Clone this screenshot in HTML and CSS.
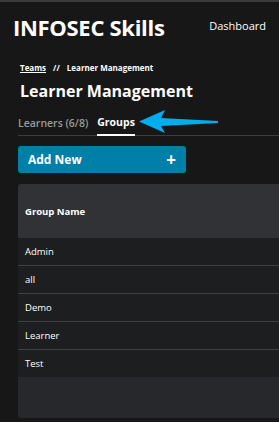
FILE: index.html
```html
<!DOCTYPE html>
<html lang="en">
<head>
<meta charset="UTF-8" />
<meta name="viewport" content="width=device-width, initial-scale=1" />
<title>Learner Management - INFOSEC Skills</title>
<link rel="stylesheet" href="styles.css">
</head>
<body>
  <header class="topbar">
    <div class="brand">INFOSEC Skills</div>
    <a class="nav-link" href="#">Dashboard</a>
  </header>

  <main class="page">
    <nav class="crumbs">
      <a href="#">Teams</a>
      <span class="sep">//</span>
      <span>Learner Management</span>
    </nav>
    <h1>Learner Management</h1>

    <div class="tabs">
      <span class="tab">Learners (6/8)</span>
      <span class="tab active">Groups</span>
      <svg class="pointer" width="82" height="26" viewBox="0 0 82 26">
        <path d="M0 11.5 L26 0 L22 8 L79 11 L79 13 L22 16 L26 23 Z" fill="#00aeef"/>
      </svg>
    </div>

    <button class="add-btn">
      <span>Add New</span>
      <span class="plus">+</span>
    </button>

    <div class="table">
      <div class="thead">Group Name</div>
      <div class="row">Admin</div>
      <div class="row">all</div>
      <div class="row">Demo</div>
      <div class="row">Learner</div>
      <div class="row last">Test</div>
      <div class="tfoot"></div>
    </div>
  </main>
</body>
</html>
```

FILE: styles.css
```css
* {
  box-sizing: border-box;
}
body {
  font-family: 'Open Sans', 'Noto Sans', sans-serif;
  background: #171717;
  color: #fff;
  margin: 0;
  border-top: 2px solid #3a3a3a;
  overflow: hidden;
  height: 422px;
}
a {
  color: #fff;
}

.topbar {
  display: flex;
  align-items: center;
  justify-content: space-between;
  padding: 8px 13px 0 13px;
  height: 42px;
}
.brand {
  font-size: 22px;
  font-weight: 700;
  letter-spacing: -0.3px;
}
.nav-link {
  font-size: 11px;
  text-decoration: none;
  margin-top: -4px;
}

.page {
  padding: 18px 0 0 18px;
}
.crumbs {
  font-size: 8px;
  font-weight: 700;
  padding-left: 2px;
  height: 12px;
}
.crumbs a {
  text-decoration: underline;
}
.crumbs .sep {
  margin: 0 5px;
}
h1 {
  font-size: 16px;
  font-weight: 700;
  margin: 5px 0 0 2px;
  line-height: 24px;
}

.tabs {
  display: flex;
  align-items: flex-end;
  gap: 9px;
  margin-top: 5px;
  border-bottom: 1px solid #3c3c3c;
  height: 28px;
}
.tab {
  font-size: 10.5px;
  font-weight: 600;
  color: #9a9a9a;
  padding-bottom: 5px;
}
.tab.active {
  color: #fff;
  font-weight: 700;
  border-bottom: 2px solid #fff;
  margin-bottom: -1px;
}
.pointer {
  align-self: center;
  margin-left: -5px;
  margin-top: 2px;
}

.add-btn {
  display: flex;
  align-items: center;
  justify-content: space-between;
  width: 168px;
  height: 27px;
  margin-top: 10px;
  padding: 0 10px;
  background: #0080a8;
  border: none;
  border-radius: 3px;
  color: #fff;
  font-family: inherit;
  font-size: 12px;
  font-weight: 700;
}
.add-btn .plus {
  font-size: 17px;
  line-height: 1;
}

.table {
  margin-top: 11px;
  border-radius: 3px 0 0 3px;
  overflow: hidden;
  font-size: 9.5px;
}
.thead {
  background: #303236;
  height: 54px;
  display: flex;
  align-items: center;
  padding-left: 7px;
  font-weight: 700;
}
.row {
  background: #1d1e20;
  height: 28px;
  display: flex;
  align-items: center;
  padding-left: 7px;
  border-bottom: 1px solid #404142;
}
.row.last {
  border-bottom: none;
  height: 27px;
}
.tfoot {
  background: #27282b;
  height: 41px;
}
```
